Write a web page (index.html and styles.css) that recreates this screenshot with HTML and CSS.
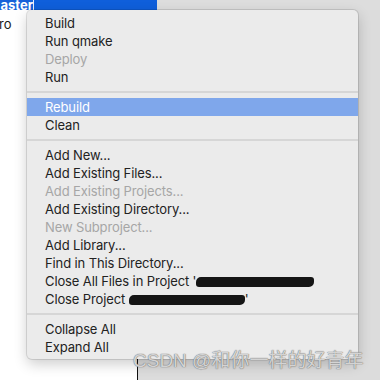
FILE: index.html
```html
<!DOCTYPE html>
<html>
<head>
<meta charset="utf-8">
<link rel="stylesheet" href="styles.css">
</head>
<body>
<div class="screen">
  <div class="topbar">
    <span class="sel"><span class="seltext">aster</span></span><span class="field"></span>
  </div>
  <div class="panes">
    <div class="left"><div class="ro">ro</div></div>
    <div class="divider"></div>
    <div class="right"></div>
  </div>

  <div class="menu">
    <div class="item">Build</div>
    <div class="item">Run qmake</div>
    <div class="item disabled">Deploy</div>
    <div class="item">Run</div>
    <div class="sep"></div>
    <div class="item active">Rebuild</div>
    <div class="item">Clean</div>
    <div class="sep"></div>
    <div class="item">Add New...</div>
    <div class="item">Add Existing Files...</div>
    <div class="item disabled">Add Existing Projects...</div>
    <div class="item">Add Existing Directory...</div>
    <div class="item disabled">New Subproject...</div>
    <div class="item">Add Library...</div>
    <div class="item">Find in This Directory...</div>
    <div class="item">Close All Files in Project '<span class="redact r1"></span></div>
    <div class="item">Close Project <span class="redact r2"></span>'</div>
    <div class="sep"></div>
    <div class="item">Collapse All</div>
    <div class="item">Expand All</div>
  </div>

  <div class="watermark">CSDN @和你一样的好青年</div>
</div>
</body>
</html>
```

FILE: styles.css
```css
html, body {
  margin: 0;
  padding: 0;
}
body {
  width: 380px;
  height: 380px;
  overflow: hidden;
  font-family: Inter, "Liberation Sans", "Noto Sans CJK SC", sans-serif;
}
.screen {
  position: relative;
  width: 380px;
  height: 380px;
  display: flex;
  flex-direction: column;
  background: #dddddd;
}
.topbar {
  height: 10px;
  display: flex;
  flex: none;
}
.sel {
  width: 33px;
  background: #1662d9;
  overflow: hidden;
  display: flex;
  justify-content: flex-end;
  align-items: flex-end;
}
.seltext {
  color: #fff;
  font-weight: 700;
  font-size: 13px;
  line-height: 13px;
  margin-bottom: -2px;
  white-space: nowrap;
}
.field {
  width: 123px;
  background: #0f5fdb;
  border-left: 1px solid #e8eefb;
}
.panes {
  flex: 1;
  display: flex;
}
.left {
  width: 137px;
  background: #ffffff;
}
.ro {
  font-size: 13px;
  color: #1a1a1a;
  line-height: 18px;
  margin-top: 5px;
  margin-left: -1px;
}
.divider {
  width: 1px;
  background: #111;
}
.right {
  flex: 1;
  background: #dcdcdc;
}

.menu {
  position: absolute;
  left: 27px;
  top: 10px;
  width: 331px;
  padding: 4px 0 3px;
  background: #ebebeb;
  border-radius: 5px;
  box-shadow: 0 0 0 1px rgba(0, 0, 0, 0.11), 0 5px 14px rgba(0, 0, 0, 0.2);
  display: flex;
  flex-direction: column;
}
.item {
  height: 18px;
  line-height: 18px;
  padding-left: 18px;
  font-size: 13px;
  letter-spacing: -0.12px;
  color: #222222;
  white-space: nowrap;
}
.item.disabled {
  color: #a6a6a6;
}
.item.active {
  background: #7fa7eb;
  color: #ffffff;
}
.sep {
  height: 12px;
  display: flex;
  align-items: center;
}
.sep::before {
  content: "";
  flex: 1;
  height: 2px;
  background: #d6d6d6;
}
.redact {
  display: inline-block;
  height: 10px;
  background: #151515;
  border-radius: 5px 3px 5px 3px;
  vertical-align: -1px;
}
.r1 {
  width: 118px;
}
.r2 {
  width: 116px;
}

.watermark {
  position: absolute;
  left: 133px;
  top: 349px;
  font-size: 19px;
  line-height: 24px;
  color: rgba(245, 245, 245, 0.75);
  text-shadow: 0 0 1px #6f6f6f, 0 0 1px #6f6f6f;
  white-space: nowrap;
  font-family: "Liberation Sans", "Noto Sans CJK SC", sans-serif;
}
```
